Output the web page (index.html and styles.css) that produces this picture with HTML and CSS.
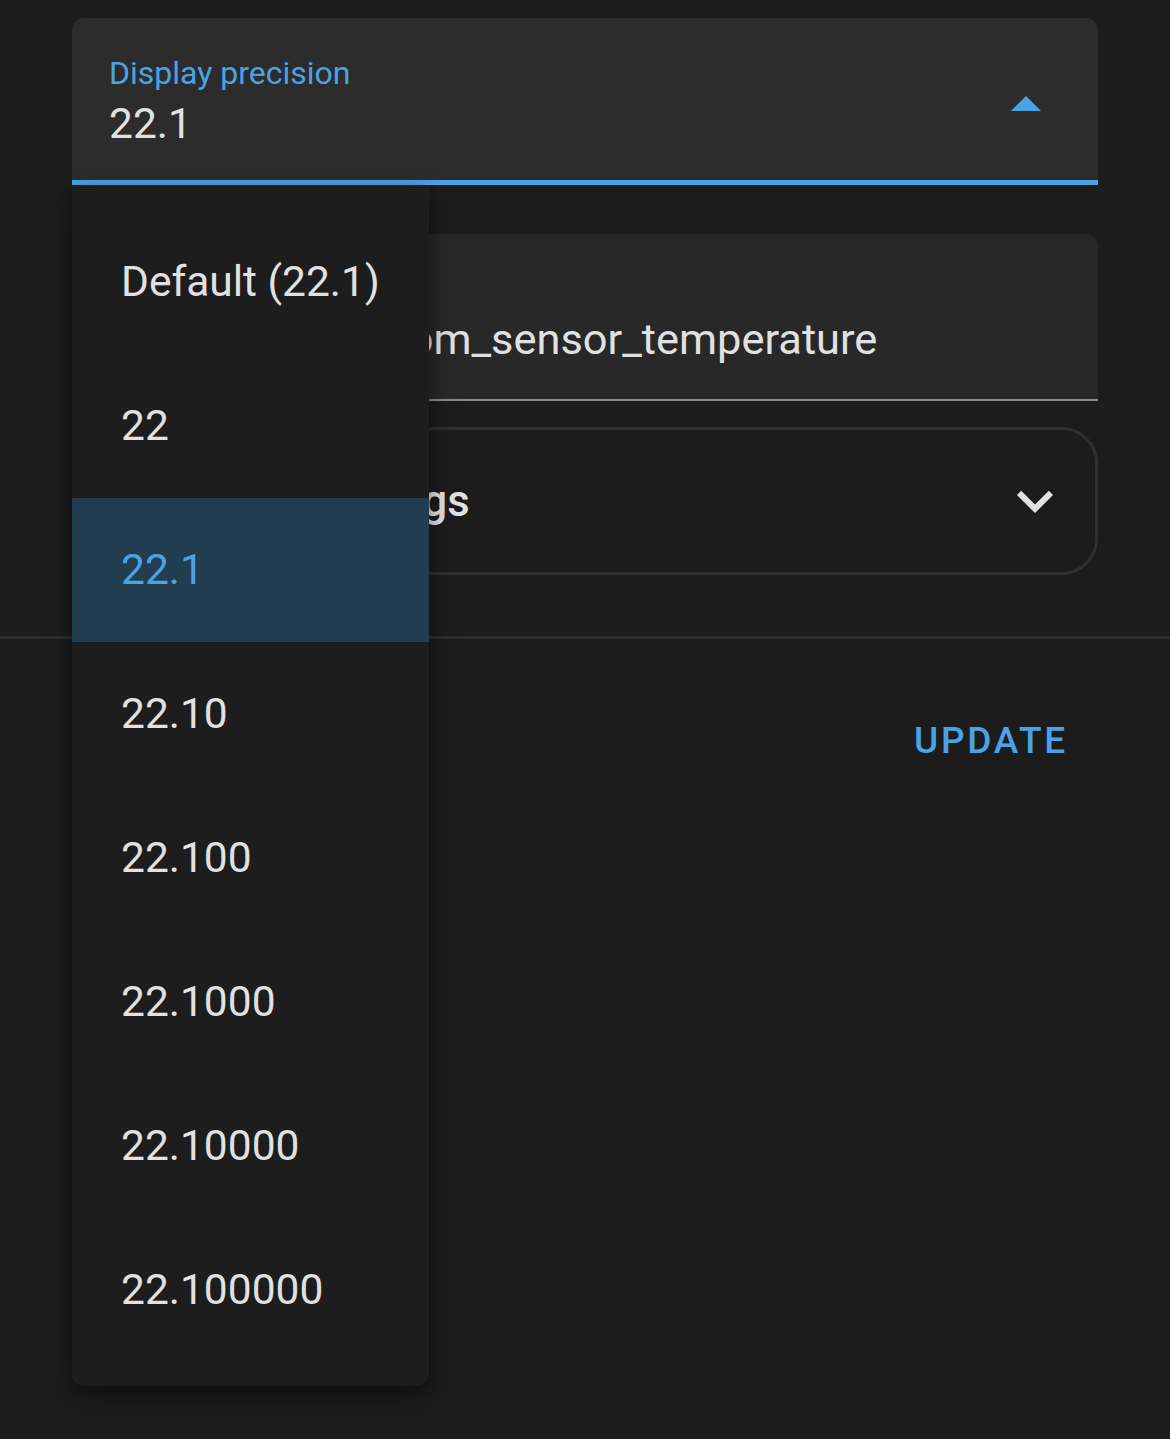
FILE: index.html
```html
<!DOCTYPE html>
<html lang="en">
<head>
<meta charset="utf-8">
<title>Display precision</title>
<link rel="stylesheet" href="styles.css">
</head>
<body>
<div class="dialog">
  <div class="content">
    <div class="select">
      <div class="field-text">
        <span class="float-label">Display precision</span>
        <span class="value">22.1</span>
      </div>
      <svg class="select-arrow" viewBox="0 0 10 5" width="30" height="15"><polygon points="0,5 5,0 10,5" fill="#4aa3e5"/></svg>
    </div>
    <div class="textfield">
      <span class="value">sensor.living_room_sensor_temperature</span>
    </div>
    <div class="expansion">
      <span class="expansion-title">Advanced settings</span>
      <svg class="chevron" viewBox="0 0 24 24" width="72" height="72"><path fill="#e1e1e1" d="M7.41,8.58L12,13.17L16.59,8.58L18,10L12,16L6,10L7.41,8.58Z"/></svg>
    </div>
  </div>
  <div class="divider"></div>
  <div class="actions">
    <span class="btn">UPDATE</span>
  </div>
</div>
<ul class="menu">
  <li class="item">Default (22.1)</li>
  <li class="item">22</li>
  <li class="item selected">22.1</li>
  <li class="item">22.10</li>
  <li class="item">22.100</li>
  <li class="item">22.1000</li>
  <li class="item">22.10000</li>
  <li class="item">22.100000</li>
</ul>
</body>
</html>
```
FILE: styles.css
```css
html, body {
  margin: 0;
  padding: 0;
  background: #1c1c1c;
  font-family: Roboto, "Noto Sans", sans-serif;
  color: #e1e1e1;
}
body {
  width: 1170px;
  height: 1439px;
  overflow: hidden;
  position: relative;
}
.content {
  padding: 18px 72px 0;
}
.select {
  display: flex;
  height: 162px;
  background: #2c2c2c;
  border-bottom: 5px solid #4aa3e5;
  border-radius: 12px 12px 0 0;
  padding: 0 57px 0 37px;
}
.field-text {
  display: flex;
  flex-direction: column;
  flex: 1;
  padding-top: 39px;
}
.float-label {
  font-size: 32px;
  line-height: 32px;
  color: #4aa3e5;
}
.value {
  margin-top: 9px;
  font-size: 42.5px;
  line-height: 52px;
  color: #e1e1e1;
  white-space: nowrap;
}
.select-arrow {
  align-self: center;
  margin-top: 9px;
}
.textfield {
  margin-top: 49px;
  height: 85px;
  padding: 80px 0 0 37px;
  background: #282828;
  border-bottom: 2px solid #8c8c8c;
  border-radius: 12px 12px 0 0;
  display: flex;
  flex-direction: column;
}
.textfield .value {
  margin-top: 0;
  font-size: 43.4px;
}
.expansion {
  margin-top: 26px;
  height: 142px;
  border: 3px solid #303030;
  border-radius: 36px;
  display: flex;
  align-items: center;
  padding: 0 24px 0 34px;
}
.expansion-title {
  flex: 1;
  font-size: 43.5px;
  font-weight: 500;
  color: #e1e1e1;
}
.divider {
  margin-top: 61px;
  height: 3px;
  background: #2e2e2e;
}
.actions {
  display: flex;
  justify-content: flex-end;
  padding: 80px 102px 0 0;
}
.btn {
  font-size: 37px;
  line-height: 44px;
  font-weight: 500;
  letter-spacing: 2.8px;
  color: #4aa3e5;
}
.menu {
  position: absolute;
  top: 185px;
  left: 72px;
  width: 357px;
  margin: 0;
  padding: 25px 0 24px;
  list-style: none;
  background: #1d1d1d;
  border-radius: 0 0 12px 12px;
  box-shadow: 0 12px 30px rgba(0, 0, 0, 0.35), 0 4px 10px rgba(0, 0, 0, 0.2);
}
.item {
  height: 144px;
  line-height: 144px;
  padding-left: 49px;
  font-size: 42.5px;
  color: #e1e1e1;
  white-space: nowrap;
}
.item.selected {
  background: #223d50;
  color: #4aa3e5;
}
```
